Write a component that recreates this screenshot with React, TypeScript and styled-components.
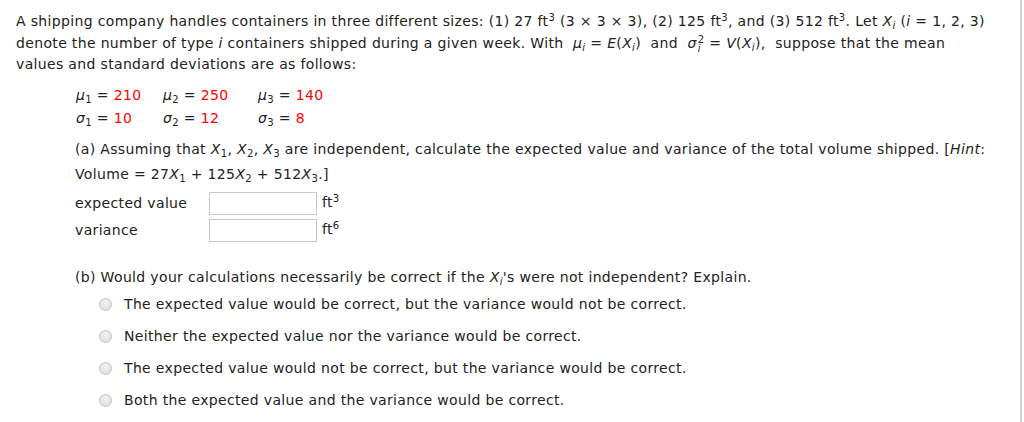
import React from 'react';
import styled, { createGlobalStyle } from 'styled-components';

const GlobalStyle = createGlobalStyle`
  html, body {
    margin: 0;
    padding: 0;
    background: #fff;
  }
  body {
    font-family: "DejaVu Sans", Verdana, sans-serif;
    font-size: 14px;
    letter-spacing: 0.34px;
    color: #222;
  }
`;

const Page = styled.div`
  box-sizing: border-box;
  width: 1022px;
  height: 422px;
  padding: 11px 0 0 16px;
  border-right: 2px solid #d4d4d4;
  overflow: hidden;
  white-space: nowrap;
`;

const Para = styled.p<{ $lh?: number }>`
  margin: 0;
  line-height: ${p => p.$lh ?? 21.5}px;
`;

const Sup = styled.sup`
  font-size: 72%;
  line-height: 0;
  vertical-align: 0.45em;
`;

const Sub = styled.sub`
  font-size: 72%;
  line-height: 0;
  vertical-align: -0.3em;
`;

const SubSup = styled.span`
  display: inline-flex;
  flex-direction: column;
  vertical-align: 5px;
  font-size: 10px;
  line-height: 9px;
  margin-left: 1px;
`;

const Red = styled.span`
  color: #f00;
`;

const Params = styled.div`
  display: grid;
  grid-template-columns: 87px 95px auto;
  grid-auto-rows: 23px;
  align-items: center;
  margin: 8px 0 0 60px;
`;

const Part = styled.div`
  margin-left: 59px;
`;

const PartA = styled(Part)`
  margin-top: 7px;
`;

const Fields = styled.div`
  display: grid;
  grid-template-columns: 134px 113px auto;
  grid-auto-rows: 23px;
  row-gap: 4px;
  align-items: center;
  margin-top: 5px;
`;

const Input = styled.input`
  box-sizing: border-box;
  width: 108px;
  height: 23px;
  margin: 0;
  border: 1px solid #c8c8c8;
  background: #fff;
  font: inherit;
`;

const Unit = styled.span`
  align-self: start;
  padding-top: 2px;
`;

const PartB = styled(Part)`
  margin-top: 25px;
`;

const Options = styled.div`
  display: flex;
  flex-direction: column;
  margin-left: 24px;
`;

const Option = styled.label`
  display: flex;
  align-items: center;
  height: 32px;
  gap: 12px;
`;

const Radio = styled.span`
  box-sizing: border-box;
  width: 13px;
  height: 13px;
  border-radius: 50%;
  border: 1px solid #c4c4c4;
  background: radial-gradient(circle at 50% 35%, #f4f4f4 0%, #dcdcdc 80%);
`;

const params = [
  { sym: 'μ', idx: 1, val: '210' },
  { sym: 'μ', idx: 2, val: '250' },
  { sym: 'μ', idx: 3, val: '140' },
  { sym: 'σ', idx: 1, val: '10' },
  { sym: 'σ', idx: 2, val: '12' },
  { sym: 'σ', idx: 3, val: '8' },
];

const options = [
  'The expected value would be correct, but the variance would not be correct.',
  'Neither the expected value nor the variance would be correct.',
  'The expected value would not be correct, but the variance would be correct.',
  'Both the expected value and the variance would be correct.',
];

const X = ({ n }: { n: React.ReactNode }) => (
  <>
    <i>X</i>
    <Sub>{n}</Sub>
  </>
);

export default function App() {
  return (
    <>
      <GlobalStyle />
      <Page>
        <Para>
          A shipping company handles containers in three different sizes: (1) 27 ft<Sup>3</Sup> (3 × 3 × 3), (2) 125
          ft<Sup>3</Sup>, and (3) 512 ft<Sup>3</Sup>. Let <X n={<i>i</i>} /> (<i>i</i> = 1, 2, 3)
          <br />
          denote the number of type <i>i</i> containers shipped during a given week. With &nbsp;<i>μ</i>
          <Sub>
            <i>i</i>
          </Sub>{' '}
          = <i>E</i>(<X n={<i>i</i>} />) &nbsp;and&nbsp; <i>σ</i>
          <SubSup>
            <span>2</span>
            <i>i</i>
          </SubSup>{' '}
          = <i>V</i>(<X n={<i>i</i>} />), &nbsp;suppose that the mean
          <br />
          values and standard deviations are as follows:
        </Para>

        <Params>
          {params.map(p => (
            <span key={p.sym + p.idx}>
              <i>{p.sym}</i>
              <Sub>{p.idx}</Sub> = <Red>{p.val}</Red>
            </span>
          ))}
        </Params>

        <PartA>
          <Para $lh={25}>
            (a) Assuming that <X n={1} />, <X n={2} />, <X n={3} /> are independent, calculate the expected value and
            variance of the total volume shipped. [<i>Hint</i>:
            <br />
            Volume = 27<X n={1} /> + 125<X n={2} /> + 512<X n={3} />.]
          </Para>
          <Fields>
            <span>expected value</span>
            <Input type="text" />
            <Unit>
              ft<Sup>3</Sup>
            </Unit>
            <span>variance</span>
            <Input type="text" />
            <Unit>
              ft<Sup>6</Sup>
            </Unit>
          </Fields>
        </PartA>

        <PartB>
          <Para>
            (b) Would your calculations necessarily be correct if the <X n={<i>i</i>} />
            's were not independent? Explain.
          </Para>
          <Options>
            {options.map(o => (
              <Option key={o}>
                <Radio />
                <span>{o}</span>
              </Option>
            ))}
          </Options>
        </PartB>
      </Page>
    </>
  );
}
